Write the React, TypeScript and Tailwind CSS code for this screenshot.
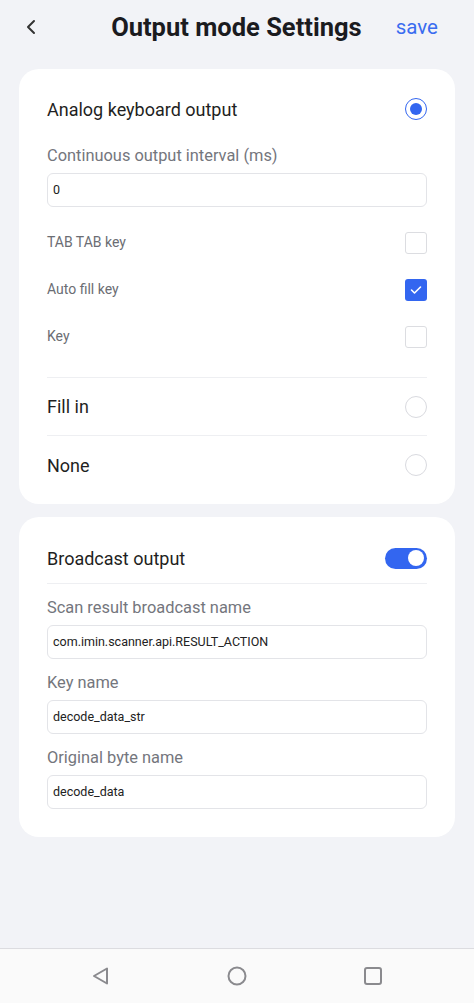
import { ChevronLeft } from "lucide-react";

const font = { fontFamily: "Roboto, 'Noto Sans', sans-serif" };

function Radio({ on }: { on?: boolean }) {
  if (on) {
    return (
      <span className="flex h-[22px] w-[22px] items-center justify-center rounded-full border-[1.5px] border-[#3366f0]">
        <span className="h-[12px] w-[12px] rounded-full bg-[#3366f0]" />
      </span>
    );
  }
  return <span className="h-[22px] w-[22px] rounded-full border-[1.5px] border-[#d9dadf]" />;
}

function Check({ on }: { on?: boolean }) {
  if (on) {
    return (
      <span className="flex h-[22px] w-[22px] items-center justify-center rounded-[3px] bg-[#3366f0]">
        <svg width="12" height="10" viewBox="0 0 12 10" fill="none">
          <path d="M1.5 5l3 3 6-6" stroke="white" strokeWidth="1.6" strokeLinecap="round" strokeLinejoin="round" />
        </svg>
      </span>
    );
  }
  return <span className="h-[22px] w-[22px] rounded-[3px] border border-[#dcdde1] bg-white" />;
}

function Field({ label, value, top }: { label: string; value: string; top: string }) {
  return (
    <div className={top}>
      <div className="text-[16.4px] leading-[24px] text-[#74767d]">{label}</div>
      <div className="mt-[5px] flex h-[34px] items-center rounded-[6px] border border-[#e3e4e8] px-[5px] text-[12.5px] text-[#222]">
        {value}
      </div>
    </div>
  );
}

export default function App() {
  const keys = [
    { label: "TAB TAB key", on: false },
    { label: "Auto fill key", on: true },
    { label: "Key", on: false },
  ];

  return (
    <div className="flex min-h-screen flex-col bg-[#f2f3f7]" style={font}>
      <div className="flex h-[54px] items-center pl-[19px] pr-[36px]">
        <ChevronLeft className="h-[24px] w-[24px] text-[#333]" strokeWidth={2} />
        <div className="flex-1 pl-[34px] text-center text-[25.5px] font-bold text-[#1b1b1f]">Output mode Settings</div>
        <div className="text-[20.5px] text-[#3a6cf0]">save</div>
      </div>

      <div className="flex-1 px-[19px] pt-[15px]">
        <div className="rounded-[20px] bg-white px-[28px] pb-[10px] pt-[20px]">
          <div className="flex h-[40px] items-center justify-between">
            <span className="text-[18px] text-[#1f1f22]">Analog keyboard output</span>
            <Radio on />
          </div>
          <Field label="Continuous output interval (ms)" value="0" top="mt-[15px]" />
          <div className="mt-[12px]">
            {keys.map((k) => (
              <div key={k.label} className="flex h-[47px] items-center justify-between">
                <span className="text-[14px] text-[#6b6d73]">{k.label}</span>
                <Check on={k.on} />
              </div>
            ))}
          </div>
          <div className="mt-[17px] h-px bg-[#eeeff2]" />
          <div className="flex h-[57px] items-center justify-between">
            <span className="text-[18px] text-[#1f1f22]">Fill in</span>
            <Radio />
          </div>
          <div className="h-px bg-[#eeeff2]" />
          <div className="flex h-[58px] items-center justify-between">
            <span className="text-[18px] text-[#1f1f22]">None</span>
            <Radio />
          </div>
        </div>

        <div className="mt-[13px] rounded-[20px] bg-white px-[28px] pb-[28px] pt-[18px]">
          <div className="flex h-[46px] items-center justify-between">
            <span className="text-[18px] text-[#1f1f22]">Broadcast output</span>
            <span className="flex h-[21px] w-[42px] items-center justify-end rounded-full bg-[#3366f0] pr-[3px]">
              <span className="h-[16px] w-[16px] rounded-full bg-white" />
            </span>
          </div>
          <div className="mt-[2px] h-px bg-[#eeeff2]" />
          <Field label="Scan result broadcast name" value="com.imin.scanner.api.RESULT_ACTION" top="mt-[12px]" />
          <Field label="Key name" value="decode_data_str" top="mt-[12px]" />
          <Field label="Original byte name" value="decode_data" top="mt-[12px]" />
        </div>
      </div>

      <div className="flex h-[55px] items-center justify-center gap-[114px] border-t border-[#dcdce0] bg-[#fafafa]">
        <svg width="22" height="22" viewBox="0 0 22 22" fill="none">
          <path d="M17 3.5v15L4 11z" stroke="#8a8a8e" strokeWidth="2" strokeLinejoin="round" />
        </svg>
        <svg width="22" height="22" viewBox="0 0 22 22" fill="none">
          <circle cx="11" cy="11" r="8.5" stroke="#8a8a8e" strokeWidth="2" />
        </svg>
        <svg width="22" height="22" viewBox="0 0 22 22" fill="none">
          <rect x="3" y="3" width="16" height="16" rx="2" stroke="#8a8a8e" strokeWidth="2" />
        </svg>
      </div>
    </div>
  );
}
